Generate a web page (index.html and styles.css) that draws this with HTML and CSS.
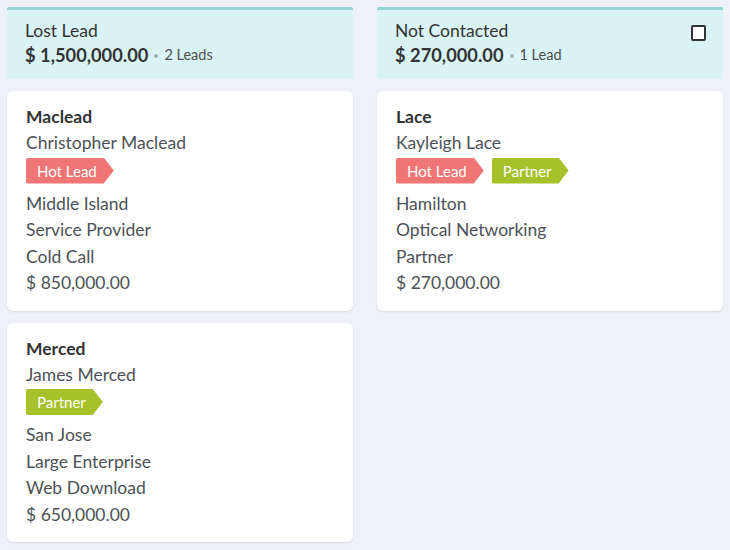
FILE: index.html
```html
<!DOCTYPE html>
<html lang="en">
<head>
    <meta charset="UTF-8">
    <title>Leads Pipeline</title>
    <link rel="stylesheet" href="styles.css">
</head>
<body>
    <div class="board">
        <div class="column">
            <div class="column-header">
                <div class="stage-name">Lost Lead</div>
                <div class="stage-total">
                    <span class="amount">$ 1,500,000.00</span>
                    <span class="dot"></span>
                    <span class="count">2 Leads</span>
                </div>
            </div>

            <div class="card">
                <div class="card-title">Maclead</div>
                <div class="card-line">Christopher Maclead</div>
                <div class="tags">
                    <span class="tag hot">Hot Lead</span>
                </div>
                <div class="card-line">Middle Island</div>
                <div class="card-line">Service Provider</div>
                <div class="card-line">Cold Call</div>
                <div class="card-line">$ 850,000.00</div>
            </div>

            <div class="card">
                <div class="card-title">Merced</div>
                <div class="card-line">James Merced</div>
                <div class="tags">
                    <span class="tag partner">Partner</span>
                </div>
                <div class="card-line">San Jose</div>
                <div class="card-line">Large Enterprise</div>
                <div class="card-line">Web Download</div>
                <div class="card-line">$ 650,000.00</div>
            </div>
        </div>

        <div class="column">
            <div class="column-header">
                <div class="stage-name">Not Contacted</div>
                <div class="stage-total">
                    <span class="amount">$ 270,000.00</span>
                    <span class="dot"></span>
                    <span class="count">1 Lead</span>
                </div>
                <span class="select-box"></span>
            </div>

            <div class="card">
                <div class="card-title">Lace</div>
                <div class="card-line">Kayleigh Lace</div>
                <div class="tags">
                    <span class="tag hot">Hot Lead</span>
                    <span class="tag partner">Partner</span>
                </div>
                <div class="card-line">Hamilton</div>
                <div class="card-line">Optical Networking</div>
                <div class="card-line">Partner</div>
                <div class="card-line">$ 270,000.00</div>
            </div>
        </div>
    </div>
</body>
</html>
```

FILE: styles.css
```css
* {
    margin: 0;
    padding: 0;
    box-sizing: border-box;
    font-family: Lato, "Open Sans", sans-serif;
}

body {
    background-color: #eef1f6;
    color: #4d5258;
}

.board {
    display: flex;
    gap: 24px;
    padding: 7px;
    align-items: flex-start;
}

.column {
    width: 346px;
    display: flex;
    flex-direction: column;
    gap: 12px;
}

.column-header {
    position: relative;
    background-color: #d9f3f7;
    border-top: 3px solid #92d3d3;
    border-radius: 2px;
    padding: 9px 18px 12px;
}

.stage-name {
    font-size: 17.5px;
    line-height: 24px;
    color: #333;
}

.stage-total {
    display: flex;
    align-items: center;
    line-height: 24px;
}

.amount {
    font-size: 18.3px;
    font-weight: bold;
    color: #333;
}

.dot {
    width: 4px;
    height: 4px;
    border-radius: 50%;
    background-color: #9bb0b3;
    margin: 2px 6px 0 6px;
}

.count {
    font-size: 14.5px;
    color: #4e4e4e;
}

.select-box {
    position: absolute;
    top: 15px;
    right: 17px;
    width: 15px;
    height: 16px;
    border: 2px solid #333;
    border-radius: 2px;
    background-color: #fff;
}

.card {
    background-color: #fff;
    border-radius: 6px;
    box-shadow: 0 1px 2px rgba(0, 0, 0, 0.1);
    padding: 13px 19px 14px;
}

.card-title {
    font-size: 17.5px;
    line-height: 26px;
    font-weight: bold;
    color: #333;
}

.card-line {
    font-size: 17.5px;
    line-height: 26.5px;
}

.tags {
    display: flex;
    gap: 8px;
    margin: 1px 0 7px;
}

.tag {
    height: 26px;
    line-height: 26px;
    font-size: 15px;
    color: #fff;
    padding: 0 17px 0 11px;
    border-radius: 2px 0 0 2px;
    clip-path: polygon(0 0, calc(100% - 10px) 0, 100% 50%, calc(100% - 10px) 100%, 0 100%);
}

.hot {
    background-color: #f07676;
}

.partner {
    background-color: #a6c12a;
}
```
